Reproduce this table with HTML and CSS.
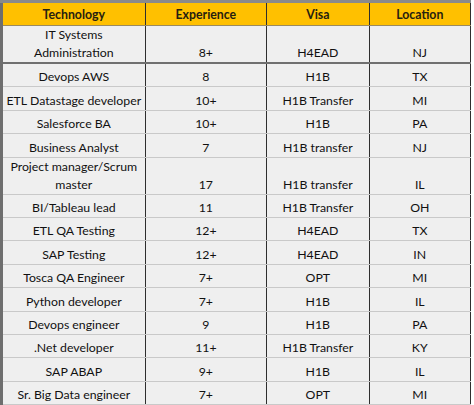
FILE: index.html
```html
<!DOCTYPE html>
<html>
<head>
<meta charset="utf-8">
<link rel="stylesheet" href="styles.css">
</head>
<body>
<table class="jobs">
  <colgroup>
    <col class="c-tech"><col class="c-exp"><col class="c-visa"><col class="c-loc">
  </colgroup>
  <thead>
    <tr class="head"><th>Technology</th><th>Experience</th><th>Visa</th><th>Location</th></tr>
  </thead>
  <tbody>
    <tr class="double first"><td>IT Systems<br>Administration</td><td>8+</td><td>H4EAD</td><td>NJ</td></tr>
    <tr><td>Devops AWS</td><td>8</td><td>H1B</td><td>TX</td></tr>
    <tr><td>ETL Datastage developer</td><td>10+</td><td>H1B Transfer</td><td>MI</td></tr>
    <tr><td>Salesforce BA</td><td>10+</td><td>H1B</td><td>PA</td></tr>
    <tr><td>Business Analyst</td><td>7</td><td>H1B transfer</td><td>NJ</td></tr>
    <tr class="double"><td>Project manager/Scrum<br>master</td><td>17</td><td>H1B transfer</td><td>IL</td></tr>
    <tr><td>BI/Tableau lead</td><td>11</td><td>H1B Transfer</td><td>OH</td></tr>
    <tr><td>ETL QA Testing</td><td>12+</td><td>H4EAD</td><td>TX</td></tr>
    <tr><td>SAP Testing</td><td>12+</td><td>H4EAD</td><td>IN</td></tr>
    <tr><td>Tosca QA Engineer</td><td>7+</td><td>OPT</td><td>MI</td></tr>
    <tr><td>Python developer</td><td>7+</td><td>H1B</td><td>IL</td></tr>
    <tr><td>Devops engineer</td><td>9</td><td>H1B</td><td>PA</td></tr>
    <tr><td>.Net developer</td><td>11+</td><td>H1B Transfer</td><td>KY</td></tr>
    <tr><td>SAP ABAP</td><td>9+</td><td>H1B</td><td>IL</td></tr>
    <tr><td>Sr. Big Data engineer</td><td>7+</td><td>OPT</td><td>MI</td></tr>
  </tbody>
</table>
</body>
</html>
```
FILE: styles.css
```css
html, body {
  margin: 0;
  padding: 0;
  background: #ffffff;
}

.jobs {
  border-collapse: collapse;
  table-layout: fixed;
  width: 471px;
  font-family: "Lato", "Open Sans", sans-serif;
  font-size: 12.3px;
  color: #111111;
  border-top: 3px solid #8a8a8a;
  border-left: 3px solid #6e6e6e;
  border-right: 1px solid #3a3a3a;
  border-bottom: 1px solid #7a7a7a;
}

.c-tech { width: 143px; }
.c-exp { width: 121px; }
.c-visa { width: 102px; }
.c-loc { width: 101px; }

.jobs th,
.jobs td {
  padding: 0 2px 1px;
  text-align: center;
  vertical-align: bottom;
  line-height: 17px;
  border-left: 1px solid #2e2e2e;
  border-right: 1px solid #2e2e2e;
  border-bottom: 1px solid #c9c9c9;
  white-space: nowrap;
}

.jobs th {
  background: #ffc000;
  font-weight: 700;
  color: #262010;
  height: 22px;
  vertical-align: middle;
  padding: 0 2px;
  border-bottom: 1px solid #9a8a60;
}

.jobs td {
  background: #efefef;
  height: 21.4px;
}

.jobs tr.double td {
  height: 35px;
  padding-bottom: 0;
  line-height: 18px;
}

.jobs tr.first td {
  height: 35px;
  padding-bottom: 0;
  border-bottom: 2px solid #707070;
}
```
